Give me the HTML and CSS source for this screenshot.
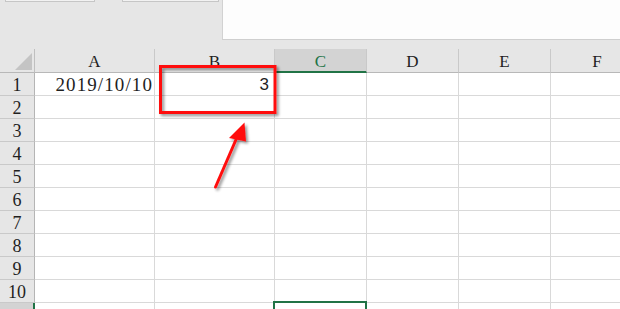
FILE: index.html
```html
<!DOCTYPE html>
<html>
<head>
<meta charset="utf-8">
<link rel="stylesheet" href="styles.css">
</head>
<body>
<div class="app">
  <div class="topbar">
    <div class="tabs">
      <div class="tab t1"></div>
      <div class="tab t2"></div>
    </div>
    <div class="panel"></div>
  </div>
  <div class="sheet">
    <div class="grid">
      <div class="corner"><span class="tri"></span></div>
      <div class="ch">A</div>
      <div class="ch">B</div>
      <div class="ch sel">C</div>
      <div class="ch">D</div>
      <div class="ch">E</div>
      <div class="ch last">F</div>

      <div class="rh">1</div><div class="c num">2019/10/10</div><div class="c val">3</div><div class="c"></div><div class="c"></div><div class="c"></div><div class="c"></div>
      <div class="rh">2</div><div class="c"></div><div class="c"></div><div class="c"></div><div class="c"></div><div class="c"></div><div class="c"></div>
      <div class="rh">3</div><div class="c"></div><div class="c"></div><div class="c"></div><div class="c"></div><div class="c"></div><div class="c"></div>
      <div class="rh">4</div><div class="c"></div><div class="c"></div><div class="c"></div><div class="c"></div><div class="c"></div><div class="c"></div>
      <div class="rh">5</div><div class="c"></div><div class="c"></div><div class="c"></div><div class="c"></div><div class="c"></div><div class="c"></div>
      <div class="rh">6</div><div class="c"></div><div class="c"></div><div class="c"></div><div class="c"></div><div class="c"></div><div class="c"></div>
      <div class="rh">7</div><div class="c"></div><div class="c"></div><div class="c"></div><div class="c"></div><div class="c"></div><div class="c"></div>
      <div class="rh">8</div><div class="c"></div><div class="c"></div><div class="c"></div><div class="c"></div><div class="c"></div><div class="c"></div>
      <div class="rh">9</div><div class="c"></div><div class="c"></div><div class="c"></div><div class="c"></div><div class="c"></div><div class="c"></div>
      <div class="rh">10</div><div class="c"></div><div class="c"></div><div class="c"></div><div class="c"></div><div class="c"></div><div class="c"></div>
      <div class="rh selrow"></div><div class="c"></div><div class="c"></div><div class="c active"></div><div class="c"></div><div class="c"></div><div class="c"></div>
    </div>
    <svg class="annot" width="620" height="309" viewBox="0 0 620 309">
      <defs>
        <filter id="sh" x="-20%" y="-20%" width="140%" height="140%">
          <feGaussianBlur in="SourceAlpha" stdDeviation="1.5"/>
          <feOffset dx="2" dy="2" result="b"/>
          <feComponentTransfer><feFuncA type="linear" slope="0.45"/></feComponentTransfer>
          <feMerge><feMergeNode/><feMergeNode in="SourceGraphic"/></feMerge>
        </filter>
      </defs>
      <g filter="url(#sh)">
        <rect x="160.5" y="66.5" width="114.5" height="46" fill="none" stroke="#ff1010" stroke-width="3"/>
        <line x1="215.5" y1="187" x2="238" y2="135" stroke="#ff1010" stroke-width="3" stroke-linecap="round"/>
        <polygon points="244.5,122.5 229,138 246,141.5" fill="#ff1010"/>
      </g>
    </svg>
  </div>
</div>
</body>
</html>
```
FILE: styles.css
```css
html, body {
  margin: 0;
  padding: 0;
  width: 620px;
  height: 309px;
  overflow: hidden;
  background: #e6e6e6;
}
.app {
  width: 620px;
  height: 309px;
  display: flex;
  flex-direction: column;
}
.topbar {
  height: 49px;
  display: flex;
  flex: none;
}
.tabs {
  width: 222px;
  display: flex;
  gap: 27px;
  padding-left: 5px;
  box-sizing: border-box;
  align-items: flex-start;
}
.tab {
  height: 1px;
  border: 1px solid #c6c6c6;
  border-top: none;
  background: #f2f2f2;
}
.t1 { width: 88px; }
.t2 { width: 95px; }
.panel {
  flex: 1;
  height: 40px;
  box-sizing: border-box;
  background: #fdfdfd;
  border-left: 1px solid #d2d2d2;
  border-bottom: 1px solid #cfcfcf;
}
.sheet {
  position: relative;
  flex: 1;
  overflow: hidden;
}
.grid {
  display: grid;
  grid-template-columns: 35px 120px 120px 92px 92px 92px 92px;
  grid-template-rows: 24px repeat(11, 23px);
  background: #fff;
  font-family: "Liberation Serif", "DejaVu Serif", serif;
  color: #1f1f1f;
}
.corner {
  background: #e6e6e6;
  border-right: 1px solid #bfbfbf;
  border-bottom: 1px solid #b8b8b8;
  box-sizing: border-box;
  position: relative;
}
.tri {
  position: absolute;
  left: 15px;
  top: 4px;
  width: 0;
  height: 0;
  border-left: 17px solid transparent;
  border-bottom: 17px solid #c4c4c4;
}
.ch {
  background: #e6e6e6;
  border-right: 1px solid #c9c9c9;
  border-bottom: 1px solid #b8b8b8;
  box-sizing: border-box;
  display: flex;
  align-items: center;
  justify-content: center;
  font-size: 17px;
  padding-top: 3px;
}
.ch.sel {
  background: #d3d3d3;
  color: #217346;
  border-bottom: 2px solid #217346;
  padding-top: 4px;
}
.ch.last { border-right: none; }
.rh {
  background: #e6e6e6;
  border-right: 1px solid #b5b5b5;
  border-bottom: 1px solid #c9c9c9;
  box-sizing: border-box;
  display: flex;
  align-items: center;
  justify-content: center;
  font-size: 18px;
  padding-top: 2px;
}
.rh.selrow {
  background: #d3d3d3;
  border-right: 2px solid #217346;
}
.c {
  border-right: 1px solid #d9d9d9;
  border-bottom: 1px solid #d9d9d9;
  box-sizing: border-box;
  position: relative;
}
.num {
  font-size: 19px;
  text-align: right;
  padding-right: 1px;
  line-height: 24px;
  letter-spacing: 1.1px;
}
.val {
  font-family: "Liberation Sans", "DejaVu Sans", sans-serif;
  font-size: 17px;
  text-align: right;
  padding-right: 5px;
  line-height: 24px;
}
.active::after {
  content: "";
  position: absolute;
  left: -2px;
  top: -2px;
  right: -1px;
  bottom: -2px;
  border: 2px solid #217346;
}
.annot {
  position: absolute;
  left: 0;
  top: -49px;
  pointer-events: none;
}
```
